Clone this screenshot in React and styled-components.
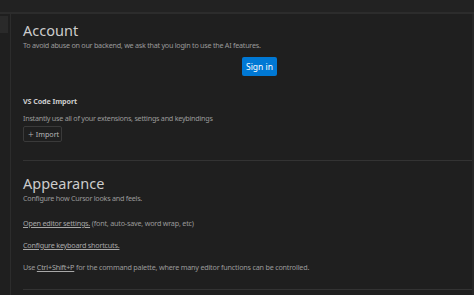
import styled, { createGlobalStyle } from "styled-components";

const Global = createGlobalStyle`
  html, body {
    margin: 0;
    padding: 0;
    background: #1f1f1f;
    font-family: "Noto Sans", "Open Sans", sans-serif;
    overflow: hidden;
  }
`;

export default function App() {
  return (
    <>
      <Global />
      <Page>
        <TopBar />
        <Body>
          <Sidebar>
            <SideItem />
          </Sidebar>
          <Content>
            <Section>
              <Heading>Account</Heading>
              <Desc>To avoid abuse on our backend, we ask that you login to use the AI features.</Desc>
              <SignInRow>
                <PrimaryButton>Sign in</PrimaryButton>
              </SignInRow>
              <SubHeading>VS Code Import</SubHeading>
              <Desc>Instantly use all of your extensions, settings and keybindings</Desc>
              <GhostButton>
                <span className="plus">+</span> Import
              </GhostButton>
            </Section>
            <Divider />
            <Section>
              <Heading>Appearance</Heading>
              <Desc>Configure how Cursor looks and feels.</Desc>
              <Line $first>
                <Link>Open editor settings.</Link> (font, auto-save, word wrap, etc)
              </Line>
              <Line>
                <Link>Configure keyboard shortcuts.</Link>
              </Line>
              <Line>
                Use <Link>Ctrl+Shift+P</Link> for the command palette, where many editor functions can be controlled.
              </Line>
            </Section>
            <Divider $bottom />
          </Content>
        </Body>
      </Page>
    </>
  );
}

const Page = styled.div`
  width: 474px;
  height: 295px;
  display: flex;
  flex-direction: column;
  background: #1f1f1f;
`;

const TopBar = styled.div`
  height: 12px;
  background: #222222;
  border-bottom: 2px solid #2c2c2c;
  flex-shrink: 0;
`;

const Body = styled.div`
  flex: 1;
  display: flex;
`;

const Sidebar = styled.div`
  width: 10px;
  border-right: 1px solid #2c2c2c;
  padding-top: 2px;
  flex-shrink: 0;
`;

const SideItem = styled.div`
  width: 8px;
  height: 17px;
  background: #2a2a2a;
`;

const Content = styled.div`
  flex: 1;
  padding-left: 12px;
  border-right: 2px solid #262626;
`;

const Section = styled.div`
  display: flex;
  flex-direction: column;
  align-items: flex-start;
`;

const Heading = styled.div`
  color: #cccccc;
  font-size: 14.5px;
  line-height: 18px;
  margin-top: 7px;
`;

const Desc = styled.div`
  color: #9a9a9a;
  font-size: 7.2px;
  letter-spacing: -0.25px;
  line-height: 10px;
  margin-top: 1px;
`;

const SignInRow = styled.div`
  width: 100%;
  display: flex;
  margin-top: 7px;
  padding-left: 219px;
  box-sizing: border-box;
`;

const PrimaryButton = styled.button`
  background: #0078d4;
  color: #ffffff;
  border: none;
  border-radius: 2px;
  font-family: "Noto Sans", sans-serif;
  font-size: 8.5px;
  height: 19px;
  width: 35px;
  padding: 0;
`;

const SubHeading = styled.div`
  color: #cccccc;
  font-weight: 700;
  font-size: 7.2px;
  letter-spacing: -0.1px;
  line-height: 10px;
  margin-top: 20px;
  margin-bottom: 6px;
`;

const GhostButton = styled.button`
  margin-top: 3px;
  background: transparent;
  border: 1px solid #3a3a3a;
  border-radius: 2px;
  color: #b8b8b8;
  font-family: "Noto Sans", sans-serif;
  font-size: 7.2px;
  height: 16px;
  width: 39px;
  padding: 0 4px;
  display: flex;
  align-items: center;
  gap: 2px;
  & .plus {
    font-size: 10px;
    line-height: 10px;
    font-weight: 300;
  }
`;

const Divider = styled.div`
  height: 1px;
  background: #333333;
  margin-top: ${(p) => (p.$bottom ? "17px" : "18px")};
  margin-bottom: 6px;
`;

const Line = styled.div`
  color: #9a9a9a;
  font-size: 7.2px;
  letter-spacing: -0.2px;
  line-height: 10px;
  margin-top: ${(p) => (p.$first ? "15px" : "12px")};
`;

const Link = styled.span`
  text-decoration: underline;
  text-underline-offset: 1px;
  color: #a8a8a8;
`;
